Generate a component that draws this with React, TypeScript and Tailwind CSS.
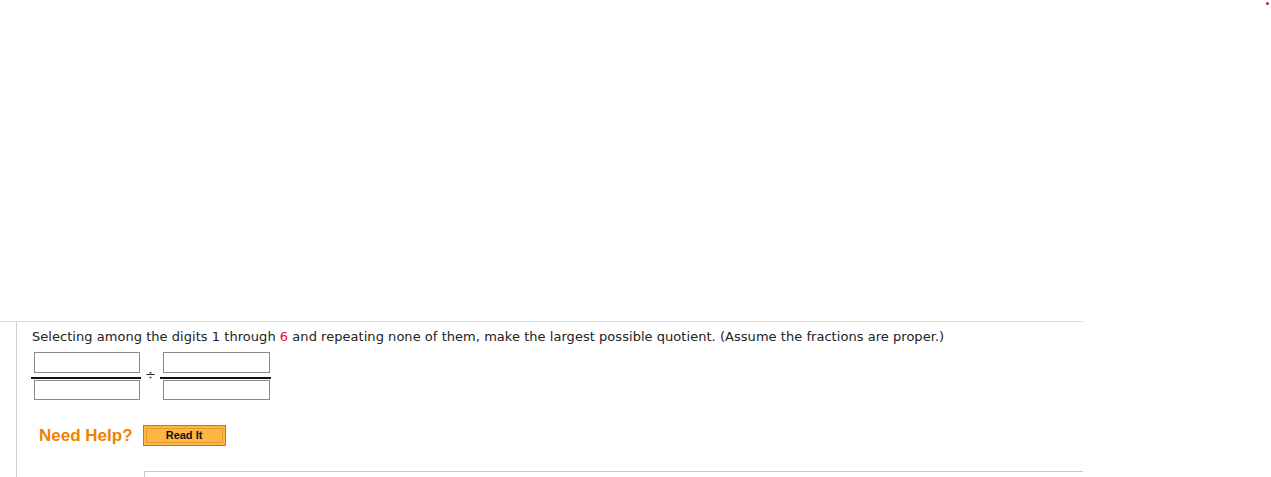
const Fraction = ({ width }: { width: number }) => (
  <div className="flex flex-col" style={{ width }}>
    <div className="pl-[3px] pr-[1px]">
      <input className="block h-[21px] w-full border border-[#8a8a8a] bg-white" />
    </div>
    <div className="mt-[4px] h-[2px] bg-[#111]" />
    <div className="mt-[1px] pl-[3px] pr-[1px]">
      <input className="block h-[20px] w-full border border-[#8a8a8a] bg-white" />
    </div>
  </div>
);

const App = () => {
  return (
    <div className="relative h-[477px] w-[1271px] overflow-hidden bg-white font-['DejaVu_Sans',sans-serif]">
      <div className="flex h-[321px] justify-end pr-[2px] pt-[2px]">
        <div className="h-[3px] w-[3px] rounded-full bg-[#e8101a]" />
      </div>

      <div className="w-[1083px] border-t border-[#dcdcdc]">
        <div className="flex">
          <div className="w-[17px] shrink-0 border-r border-[#cfcfcf]" />
          <div className="flex-1 pl-[15px] pt-[6px]">
            <p className="text-[13px] leading-[17px] tracking-[0.04px] text-[#222]">
              Selecting among the digits 1 through{" "}
              <span className="text-[#e8101a]">6</span> and repeating none of them, make the
              largest possible quotient. (Assume the fractions are proper.)
            </p>

            <div className="-ml-[1px] mt-[7px] flex items-center">
              <Fraction width={110} />
              <div className="w-[19px] pb-[3px] text-center text-[13px] leading-none text-[#222]">÷</div>
              <Fraction width={111} />
            </div>

            <div className="mt-[25px] flex h-[21px] items-center pl-[7px]">
              <span className="font-['Liberation_Sans',sans-serif] text-[17px] font-bold leading-[21px] text-[#ef8200]">
                Need Help?
              </span>
              <button className="ml-[10px] h-[21px] w-[83px] border border-[#c97416] bg-[#ffb640] p-[2px]">
                <span className="flex h-full w-full items-center justify-center border border-[#e79a3a] font-['Liberation_Sans',sans-serif] text-[11px] font-bold leading-none text-[#111]">
                  Read It
                </span>
              </button>
            </div>

            <div className="ml-[112px] mt-[25px] h-[30px] border-l border-t border-[#c8c8c8]" />
          </div>
        </div>
      </div>
    </div>
  );
};

export default App;
